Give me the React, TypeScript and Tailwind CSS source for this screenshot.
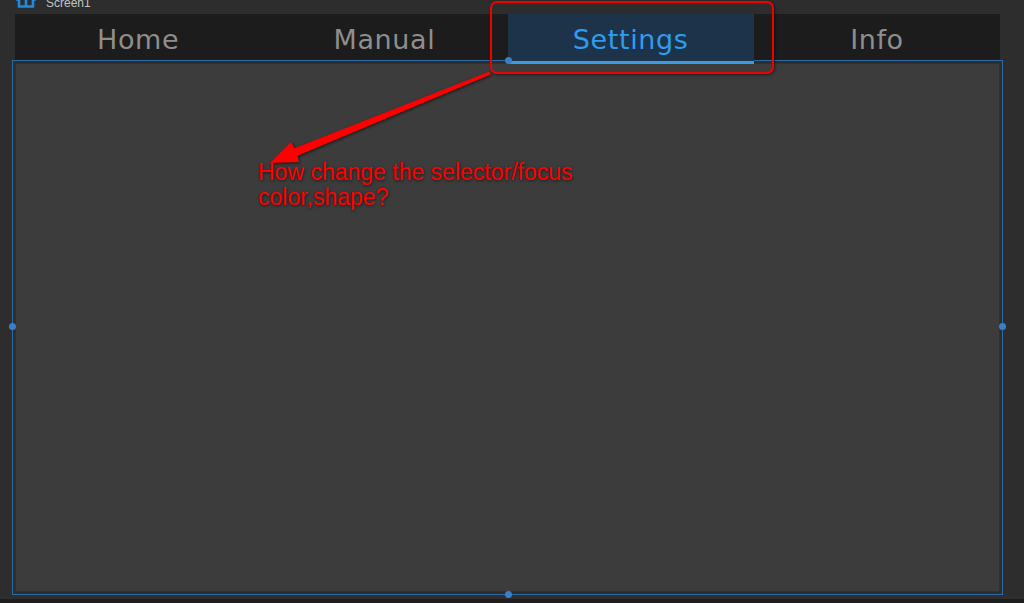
import React from 'react';

const tabs = ['Home', 'Manual', 'Settings', 'Info'];
const activeTab = 'Settings';

function ScreenIcon() {
  return (
    <svg width="20" height="10" viewBox="0 0 20 10" className="block">
      <path
        d="M0 1.5 H3 V8.5 H17 V1.5 H20 M10 1.5 V8.5"
        fill="none"
        stroke="#1f8ae0"
        strokeWidth="2.6"
      />
    </svg>
  );
}

function Handle({ className }: { className: string }) {
  return (
    <div
      className={`absolute h-[7px] w-[7px] rounded-full bg-[#3a7ec6] ${className}`}
    />
  );
}

export default function App() {
  return (
    <div className="relative h-[603px] w-[1024px] overflow-hidden bg-[#2d2d2d] font-['Liberation_Sans',Arial,sans-serif]">
      <div className="flex h-[14px] items-start gap-[10px] overflow-hidden pl-[16px]">
        <div className="mt-[-2px]">
          <ScreenIcon />
        </div>
        <span className="mt-[-3px] text-[12px] leading-none text-[#c4c4c4]">
          Screen1
        </span>
      </div>

      <div className="ml-[15px] grid h-[46px] w-[985px] grid-cols-4 bg-[#1c1c1c] font-['DejaVu_Sans',sans-serif]">
        {tabs.map((tab) => {
          const active = tab === activeTab;
          return (
            <div
              key={tab}
              className={
                active
                  ? 'flex items-center justify-center border-b-[3px] border-[#3b9be6] bg-[#1d3349] pt-[6px] text-[27px] tracking-[0.6px] text-[#2e9cf0]'
                  : 'flex items-center justify-center pt-[3px] text-[27px] tracking-[0.6px] text-[#8e8e8e]'
              }
            >
              {tab}
            </div>
          );
        })}
      </div>

      <div className="ml-[12px] h-[535px] w-[991px] border border-[#2d6aa6] p-[2px]">
        <div className="h-full w-full border border-[#303030] bg-[#3c3c3c]" />
      </div>
      <div className="mt-[4px] h-[6px] bg-[#1e1e1e]" />

      <Handle className="left-[505px] top-[57px]" />
      <Handle className="left-[9px] top-[323px]" />
      <Handle className="left-[999px] top-[323px]" />
      <Handle className="left-[505px] top-[591px]" />

      <div className="absolute left-[490px] top-[1px] h-[73px] w-[284px] rounded-[7px] border-2 border-[#f00000] shadow-[1px_1px_3px_rgba(0,0,0,0.5)]" />

      <svg
        className="absolute left-0 top-0"
        width="1024"
        height="603"
        viewBox="0 0 1024 603"
      >
        <polygon
          points="270,163 291,142 294.5,148.3 489.4,71.6 490.6,74.4 297.5,155.7 299,162"
          fill="#ff0000"
          style={{ filter: 'drop-shadow(1px 1px 1.5px rgba(0,0,0,0.6))' }}
        />
      </svg>

      <div className="absolute left-[258px] top-[160px] text-[23px] leading-[25px] text-[#ff0000] [text-shadow:1px_1px_3px_rgba(0,0,0,0.6)]">
        How change the selector/focus
        <br />
        color,shape?
      </div>
    </div>
  );
}
